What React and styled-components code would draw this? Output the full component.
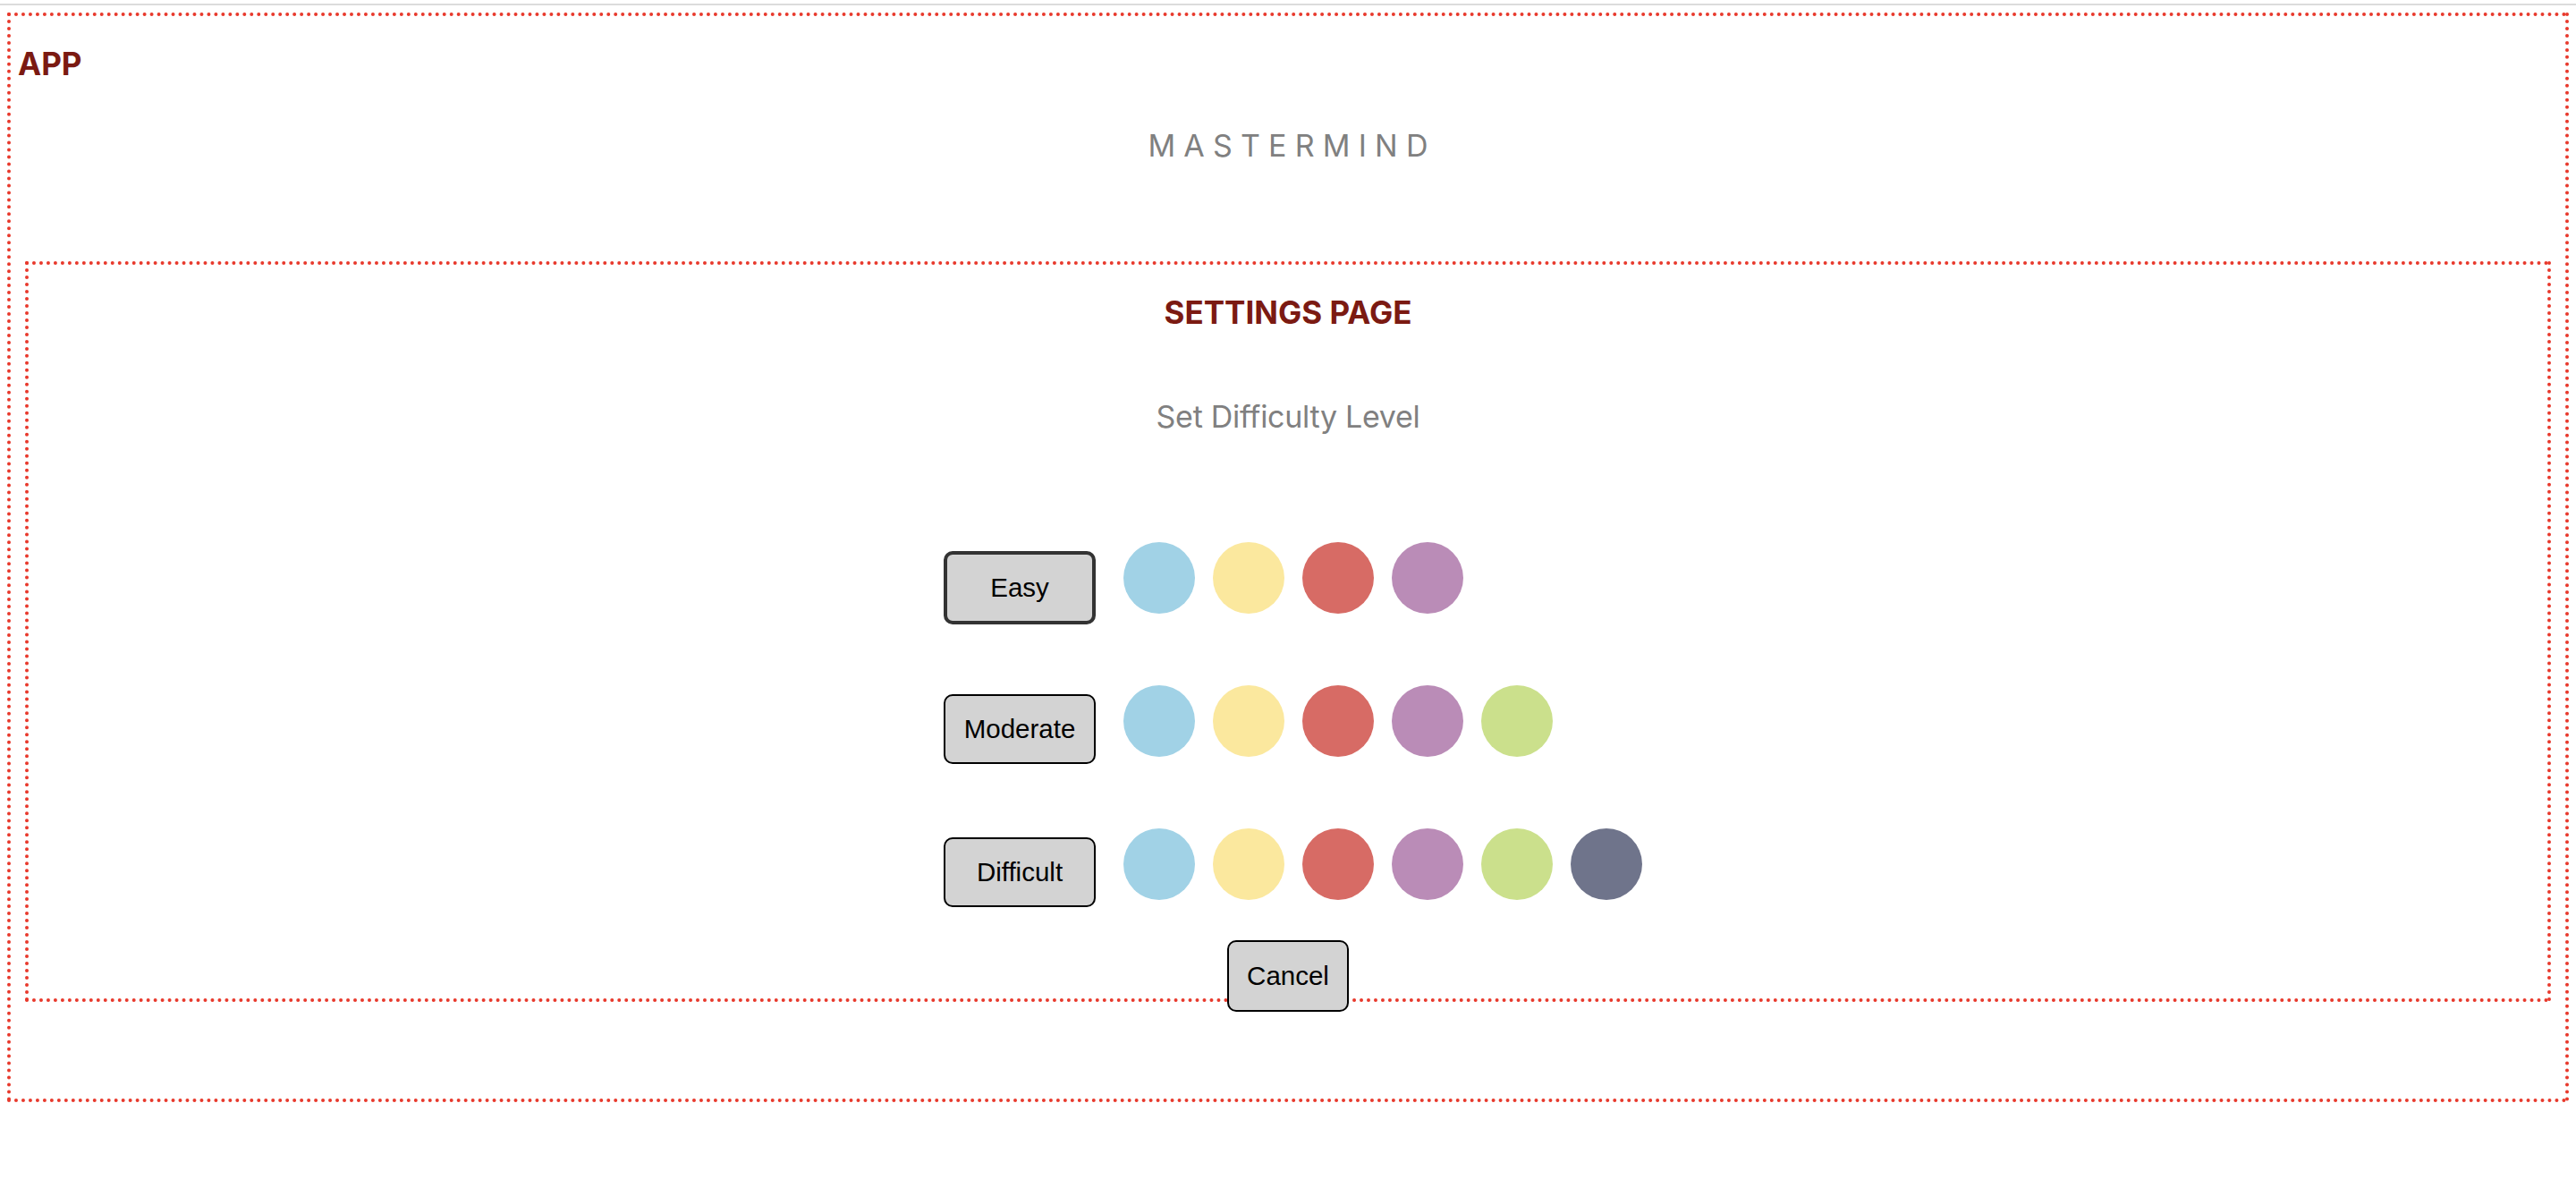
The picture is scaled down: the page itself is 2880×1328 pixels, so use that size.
import React from 'react';
import styled, { createGlobalStyle } from 'styled-components';

// Page-wide reset and base font
const GlobalStyle = createGlobalStyle`
  body {
    margin: 0;
    background: #ffffff;
    font-family: Inter, "Noto Sans", sans-serif;
  }
`;

const TopRule = styled.div`
  height: 2px;
  margin-top: 4px;
  background: #dcdcdc;
`;

const Page = styled.div`
  padding: 8px;
`;

const AppFrame = styled.div`
  border: 4px dotted #e8392c;
  padding: 0 8px 108px;
`;

const FrameLabel = styled.div`
  margin-top: 32px;
  font-size: 35px;
  font-weight: 700;
  color: #7b1a12;
`;

const GameTitle = styled.h1`
  margin: 50px 0 0;
  padding-left: 9px;
  text-align: center;
  font-size: 34px;
  font-weight: 400;
  letter-spacing: 9.2px;
  color: #808080;
`;

const SettingsFrame = styled.section`
  box-sizing: border-box;
  height: 828px;
  margin: 109px 8px 0;
  border: 4px dotted #e8392c;
  display: flex;
  flex-direction: column;
  align-items: center;
`;

const SettingsTitle = styled.h2`
  margin: 32px 0 0;
  font-size: 35px;
  font-weight: 700;
  color: #7b1a12;
`;

const Subtitle = styled.p`
  margin: 75px 0 0;
  font-size: 34px;
  font-weight: 400;
  letter-spacing: -0.3px;
  color: #808080;
`;

const LevelList = styled.div`
  width: 770px;
  margin-top: 120px;
  display: flex;
  flex-direction: column;
  gap: 80px;
`;

const LevelRow = styled.div`
  height: 80px;
  display: flex;
  align-items: flex-start;
`;

const Button = styled.button`
  box-sizing: border-box;
  font-family: "Liberation Sans", Arial, sans-serif;
  font-size: 29.5px;
  line-height: 34px;
  color: #000;
  background: #d3d3d3;
  border-radius: 10px;
  cursor: pointer;
`;

const LevelButton = styled(Button)`
  flex: none;
  width: 170px;
  margin: 10px 31px 0 0;
  padding: 20px 0;
  border: ${(p) => (p.$selected ? '4.5px solid #333333' : '2px solid #000000')};
`;

const Peg = styled.span`
  flex: none;
  width: 80px;
  height: 80px;
  margin-right: 20px;
  border-radius: 50%;
  background: ${(p) => p.$color};
`;

const CancelButton = styled(Button)`
  margin-top: 45px;
  padding: 21px 20.5px;
  border: 2px solid #000000;
`;

const PEG_COLORS = ['#a1d2e6', '#fbe89e', '#d76b65', '#ba8cb7', '#cbe08c', '#6f748b'];

const LEVELS = [
  { name: 'Easy', pegs: 4 },
  { name: 'Moderate', pegs: 5 },
  { name: 'Difficult', pegs: 6 },
];

const App = () => {
  const selected = 'Easy';

  return (
    <>
      <GlobalStyle />
      <TopRule />
      <Page>
        <AppFrame>
          <FrameLabel>APP</FrameLabel>
          <GameTitle>MASTERMIND</GameTitle>

          {/* Settings */}
          <SettingsFrame>
            <SettingsTitle>SETTINGS PAGE</SettingsTitle>
            <Subtitle>Set Difficulty Level</Subtitle>
            <LevelList>
              {LEVELS.map((level) => (
                <LevelRow key={level.name}>
                  <LevelButton $selected={level.name === selected}>{level.name}</LevelButton>
                  {PEG_COLORS.slice(0, level.pegs).map((c) => (
                    <Peg key={c} $color={c} />
                  ))}
                </LevelRow>
              ))}
            </LevelList>
            <CancelButton>Cancel</CancelButton>
          </SettingsFrame>
        </AppFrame>
      </Page>
    </>
  );
};

export default App;
